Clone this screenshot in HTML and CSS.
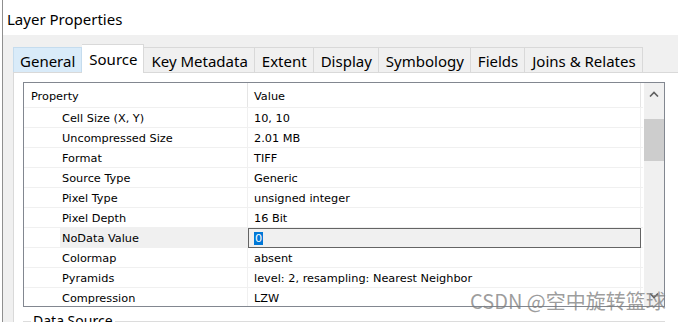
FILE: index.html
```html
<!DOCTYPE html>
<html lang="en">
<head>
    <meta charset="UTF-8">
    <title>Layer Properties</title>
    <link rel="stylesheet" href="styles.css">
</head>
<body>
    <div class="window">
        <div class="titlebar">Layer Properties</div>

        <div class="main">
            <!-- Tab strip -->
            <div class="tabs">
                <div class="tab hover">General</div>
                <div class="tab active">Source</div>
                <div class="tab">Key Metadata</div>
                <div class="tab">Extent</div>
                <div class="tab">Display</div>
                <div class="tab">Symbology</div>
                <div class="tab">Fields</div>
                <div class="tab">Joins &amp; Relates</div>
            </div>

            <div class="panel">
                <!-- Property grid -->
                <div class="grid">
                    <div class="grid-main">
                        <div class="grid-head">
                            <div class="head-prop">Property</div>
                            <div class="head-val">Value</div>
                        </div>
                        <div class="row"><div class="indent"></div><div class="cell-prop">Cell Size (X, Y)</div><div class="cell-val">10, 10</div></div>
                        <div class="row"><div class="indent"></div><div class="cell-prop">Uncompressed Size</div><div class="cell-val">2.01 MB</div></div>
                        <div class="row"><div class="indent"></div><div class="cell-prop">Format</div><div class="cell-val">TIFF</div></div>
                        <div class="row"><div class="indent"></div><div class="cell-prop">Source Type</div><div class="cell-val">Generic</div></div>
                        <div class="row"><div class="indent"></div><div class="cell-prop">Pixel Type</div><div class="cell-val">unsigned integer</div></div>
                        <div class="row"><div class="indent"></div><div class="cell-prop">Pixel Depth</div><div class="cell-val">16 Bit</div></div>
                        <div class="row"><div class="indent"></div><div class="cell-prop current">NoData Value</div><div class="cell-val editing"><span class="selected">0</span></div></div>
                        <div class="row"><div class="indent"></div><div class="cell-prop">Colormap</div><div class="cell-val">absent</div></div>
                        <div class="row"><div class="indent"></div><div class="cell-prop">Pyramids</div><div class="cell-val">level: 2, resampling: Nearest Neighbor</div></div>
                        <div class="row"><div class="indent"></div><div class="cell-prop">Compression</div><div class="cell-val">LZW</div></div>
                    </div>
                    <div class="scrollbar">
                        <div class="sb-btn">
                            <svg width="10" height="6" viewBox="0 0 10 6"><polyline points="1,5.5 5,1.5 9,5.5" fill="none" stroke="#606060" stroke-width="1.6"/></svg>
                        </div>
                        <div class="sb-track"><div class="sb-thumb"></div></div>
                        <div class="sb-btn">
                            <svg width="10" height="6" viewBox="0 0 10 6"><polyline points="1,0.5 5,4.5 9,0.5" fill="none" stroke="#606060" stroke-width="1.6"/></svg>
                        </div>
                    </div>
                </div>

                <fieldset class="group">
                    <legend>Data Source</legend>
                </fieldset>
            </div>
        </div>

        <div class="watermark">CSDN @空中旋转篮球</div>
    </div>
</body>
</html>
```

FILE: styles.css
```css
* {
    box-sizing: border-box;
}
body {
    margin: 0;
    background: #fff;
    font-family: "Noto Sans", sans-serif;
    overflow: hidden;
}
.window {
    position: relative;
    margin-left: 2px;
    height: 322px;
    border-left: 1px solid #8f8f8f;
    background: #f0f0f0;
    overflow: hidden;
}
.titlebar {
    height: 35px;
    padding: 4px 0 0 4px;
    line-height: 30px;
    font-size: 15px;
    background: #fff;
    color: #000;
}
.main {
    padding: 11px 0 0 10px;
}
.tabs {
    display: flex;
    align-items: flex-end;
    height: 26px;
}
.tab {
    height: 25px;
    padding: 0 6px 0 7px;
    line-height: 26px;
    font-size: 15px;
    color: #000;
    border: 1px solid #d9d9d9;
    border-bottom: none;
    border-left: none;
    background: #f0f0f0;
}
.tab:first-child {
    border-left: 1px solid #d9d9d9;
    padding-left: 6px;
}
.tab.hover {
    background: #d9ebf9;
    border-color: #c5dcee;
}
.tab.active {
    position: relative;
    height: 29px;
    margin-bottom: -1px;
    line-height: 28px;
    background: #fff;
    border-color: #d9d9d9;
}
.panel {
    height: 260px;
    padding: 9px 0 0 9px;
    background: #fff;
    border: 1px solid #d9d9d9;
    border-right: none;
}
.grid {
    display: flex;
    width: 642px;
    height: 225px;
    border: 1px solid #828790;
    background: #fff;
}
.grid-main {
    width: 619px;
    overflow: hidden;
    font-family: "DejaVu Sans", sans-serif;
    font-size: 11.3px;
    color: #000;
}
.grid-head {
    display: flex;
    height: 25px;
    border-bottom: 1px solid #f0f0f0;
    line-height: 27px;
}
.head-prop {
    width: 224px;
    padding-left: 7px;
    border-right: 1px solid #e5e5e5;
}
.head-val {
    width: 393px;
    padding-left: 6px;
    border-right: 1px solid #e5e5e5;
}
.row {
    display: flex;
    height: 20px;
    line-height: 21px;
    border-bottom: 1px solid #f0f0f0;
    white-space: nowrap;
}
.indent {
    width: 36px;
}
.cell-prop {
    width: 188px;
    padding-left: 2px;
    border-right: 1px solid #f0f0f0;
}
.cell-prop.current {
    background: #f0f0f0;
}
.cell-val {
    width: 393px;
    padding-left: 6px;
    border-right: 1px solid #f0f0f0;
}
.cell-val.editing {
    height: 20px;
    padding-left: 5px;
    border: 1px solid #646464;
    background: #f0f0f0;
    line-height: 19px;
}
.selected {
    background: #0078d7;
    color: #fff;
    padding: 0 1px;
}
.scrollbar {
    display: flex;
    flex-direction: column;
    width: 20px;
    margin-left: 1px;
    background: #f0f0f0;
}
.sb-btn {
    height: 21px;
    display: flex;
    align-items: center;
    justify-content: center;
}
.sb-track {
    flex: 1;
    padding-top: 15px;
}
.sb-thumb {
    height: 42px;
    background: #cdcdcd;
}
.group {
    width: 642px;
    height: 40px;
    margin: 7px 0 0 0;
    padding: 0;
    border: 1px solid #dcdcdc;
}
.group legend {
    margin-left: 7px;
    padding: 0 2px;
    font-size: 14px;
    line-height: 14px;
    color: #000;
}
.watermark {
    position: absolute;
    left: 467px;
    top: 286px;
    font-family: "Noto Sans CJK SC", sans-serif;
    font-size: 20px;
    color: rgba(125, 125, 125, 0.75);
    white-space: nowrap;
}
```
